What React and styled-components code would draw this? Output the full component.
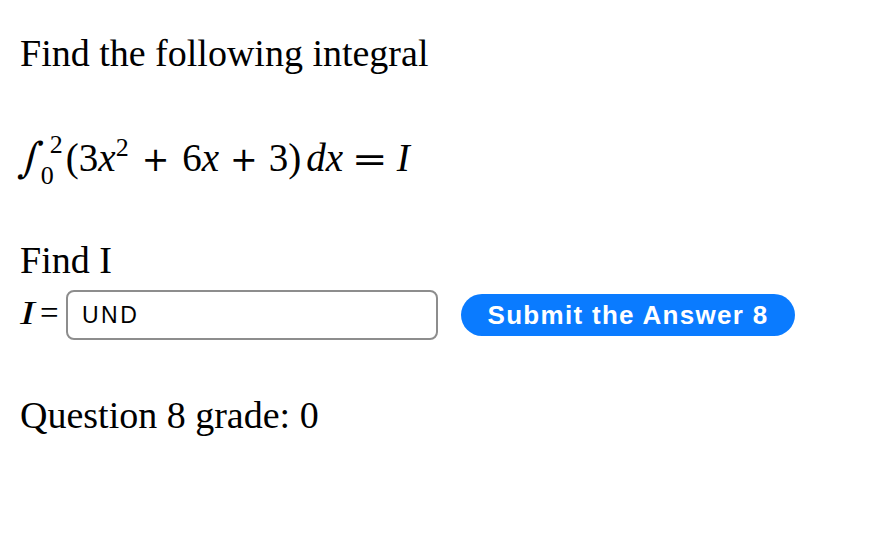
import React from "react";
import styled, { createGlobalStyle } from "styled-components";

const Global = createGlobalStyle`
  html, body { margin: 0; padding: 0; background: #fff; }
  body { font-family: "Liberation Serif", "Times New Roman", serif; color: #000; }
`;

const Page = styled.main`
  display: flex;
  flex-direction: column;
  padding: 31px 20px 0 20px;
`;

const Text = styled.p`
  margin: ${(p) => p.$mt || 0}px 0 0 0;
  font-size: 38px;
  line-height: 44px;
`;

const MathLine = styled.div`
  margin-top: 53px;
  font-family: "Liberation Serif", "Times New Roman", serif;
  font-size: 39px;
  line-height: 60px;
  height: 60px;
  white-space: nowrap;
`;

const Integral = styled.span`
  display: inline-block;
  font-family: "DejaVu Serif", serif;
  font-size: 38px;
  transform: skewX(-12deg) scaleY(1.1);
  margin-left: 1px;
`;

const Limits = styled.span`
  display: inline-flex;
  flex-direction: column;
  font-size: 26px;
  line-height: 31px;
  margin: -24px 3px -24px 0;
  vertical-align: 18px;
`;

const Lim = styled.span`
  padding-left: ${(p) => p.$ml || 0}px;
`;

const V = styled.i`
  font-style: italic;
  margin-left: ${(p) => p.$ml || 0}px;
`;

const Sup = styled.span`
  font-size: 26px;
  line-height: 0;
  vertical-align: 15px;
  margin-left: 0;
`;

const Op = styled.span`
  display: inline-block;
  font-family: "DejaVu Sans", sans-serif;
  font-size: 33px;
  margin: 0 ${(p) => p.$m || 8}px;
  transform: scaleX(${(p) => p.$sx || 1});
`;

const Row = styled.div`
  margin-top: 8px;
  display: flex;
  align-items: center;
  height: 50px;
`;

const Label = styled.span`
  font-size: 33px;
  width: 46px;
  flex: none;
  line-height: 1;
  transform: translateY(-2px);
  white-space: nowrap;
`;

const LabelI = styled.i`
  display: inline-block;
  font-style: italic;
  transform: scaleX(1.35);
  transform-origin: left center;
  margin-right: 9px;
`;

const Field = styled.input`
  box-sizing: border-box;
  width: 372px;
  height: 50px;
  border: 2px solid #8d8d8d;
  border-radius: 8px;
  padding: 0 14px;
  font-family: "Liberation Sans", Arial, sans-serif;
  font-size: 23px;
  letter-spacing: 2.5px;
  color: #000;
  background: #fff;
  outline: none;
`;

const Button = styled.button`
  margin-left: 23px;
  width: 334px;
  height: 42px;
  border: none;
  border-radius: 21px;
  background: #0a7bff;
  color: #fff;
  font-family: "Liberation Sans", Arial, sans-serif;
  font-weight: 700;
  font-size: 26px;
  letter-spacing: 1.3px;
  padding: 0;
  cursor: pointer;
`;

export default function App() {
  return (
    <>
      <Global />
      <Page>
        <Text>Find the following integral</Text>
        <MathLine>
          <Integral>∫</Integral>
          <Limits>
            <Lim $ml={9}>2</Lim>
            <Lim>0</Lim>
          </Limits>
          <span>(3</span>
          <V>x</V>
          <Sup>2</Sup>
          <Op $m={13}>+</Op>
          <span>6</span>
          <V>x</V>
          <Op $m={11}>+</Op>
          <span>3)</span>
          <V $ml={5}>dx</V>
          <Op $m={13} $sx={1.3}>=</Op>
          <V>I</V>
        </MathLine>
        <Text $mt={50}>Find I</Text>
        <Row>
          <Label>
            <LabelI>I</LabelI>=
          </Label>
          <Field defaultValue="UND" />
          <Button>Submit the Answer 8</Button>
        </Row>
        <Text $mt={53}>Question 8 grade: 0</Text>
      </Page>
    </>
  );
}
